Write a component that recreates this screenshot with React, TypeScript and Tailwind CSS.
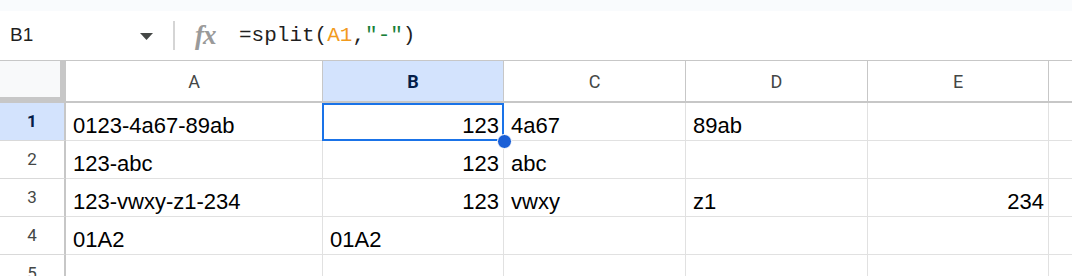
const cols = ['A', 'B', 'C', 'D', 'E', ''];
const widths = ['w-[257px]', 'w-[181px]', 'w-[182px]', 'w-[182px]', 'w-[181px]', 'w-[181px]'];

const rows: string[][] = [
  ['0123-4a67-89ab', '123', '4a67', '89ab', '', ''],
  ['123-abc', '123', 'abc', '', '', ''],
  ['123-vwxy-z1-234', '123', 'vwxy', 'z1', '234', ''],
  ['01A2', '01A2', '', '', '', ''],
  ['', '', '', '', '', ''],
];

// numbers go right, text goes left (like sheets does)
const isNumber = (v: string) => /^[1-9]\d*$/.test(v);

function FormulaBar() {
  return (
    <div className="h-[49px] flex items-center">
      <div className="w-[140px] pl-[10px] text-[19px] text-[#1f1f1f] font-['Liberation_Sans',Arial,sans-serif]">
        B1
      </div>
      <svg width="13" height="7" viewBox="0 0 13 7" className="mt-[1px]">
        <path d="M0 0 L13 0 L6.5 7 Z" fill="#444746" />
      </svg>
      <div className="ml-[20px] w-[2px] h-[29px] bg-[#d5d5d5]" />
      <div className="ml-[20px] w-[28px] text-[27px] leading-none italic font-bold text-[#9a9a9a] font-['Liberation_Serif',serif] tracking-[-1px]">
        fx
      </div>
      <div className="ml-[16px] text-[21px] text-[#1f1f1f] font-['Liberation_Mono',monospace] whitespace-pre">
        =split(<span className="text-[#f29a1d]">A1</span>,<span className="text-[#188038]">"-"</span>)
      </div>
    </div>
  );
}

function HeaderRow() {
  return (
    <div className="flex h-[43px] border-t border-b-2 border-[#c7c7c7]">
      <div className="w-[66px] shrink-0 bg-[#f8f9fa] border-r-[6px] border-b-[4px] border-[#c7c7c7]" />
      {cols.map((c, i) => (
        <div
          key={i}
          className={`${widths[i]} shrink-0 flex items-center justify-center border-r border-[#c7c7c7] text-[18px] font-['Roboto',Arial,sans-serif] ${
            c === 'B' ? 'bg-[#d3e3fd] text-[#041e49] font-bold' : 'text-[#444746]'
          }`}
        >
          {c}
        </div>
      ))}
    </div>
  );
}

export default function App() {
  return (
    <div className="w-[1072px] h-[276px] overflow-hidden bg-white">
      <div className="h-[11px] bg-[#f9fbfd]" />
      <FormulaBar />

      <div className="relative">
        <HeaderRow />
        {rows.map((row, r) => (
          <div key={r} className="flex h-[38px]">
            <div
              className={`w-[66px] shrink-0 flex items-center justify-center border-r-2 border-b border-r-[#c7c7c7] border-b-[#d9d9d9] text-[17px] font-['Roboto',Arial,sans-serif] ${
                r === 0 ? 'bg-[#d3e3fd] text-[#041e49] font-bold' : 'text-[#444746]'
              }`}
            >
              {r + 1}
            </div>
            {row.map((v, i) => (
              <div
                key={i}
                className={`${widths[i]} shrink-0 flex items-end pb-[2px] border-r border-b border-[#e1e1e1] text-[22px] leading-[25px] text-black font-['Liberation_Sans',Arial,sans-serif] ${
                  isNumber(v) ? 'justify-end pr-[4px]' : 'justify-start pl-[7px]'
                }`}
              >
                {v}
              </div>
            ))}
          </div>
        ))}

        {/* active cell B1 */}
        <div className="absolute left-[322px] top-[43px] w-[182px] h-[38px] border-2 border-[#1a73e8]" />
        <div className="absolute left-[497px] top-[74px] w-[15px] h-[15px] rounded-full bg-[#1a5fd6] border border-white" />
      </div>
    </div>
  );
}
